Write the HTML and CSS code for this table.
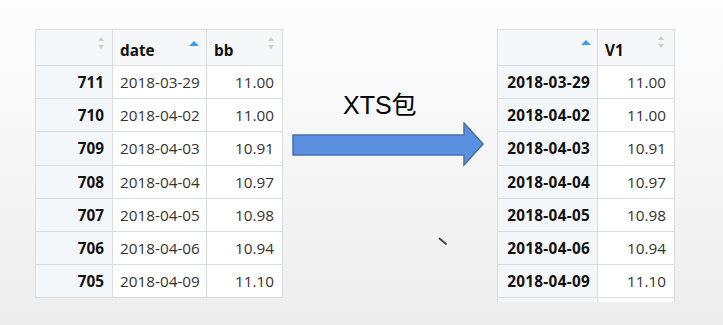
FILE: index.html
```html
<!DOCTYPE html>
<html lang="en">
<head>
	<meta charset="UTF-8">
	<title>xts</title>
	<link rel="stylesheet" href="styles.css">
</head>
<body>
	<div class="stage">
		<!-- 原始数据框 -->
		<div class="grid left-grid">
			<table>
				<colgroup>
					<col class="c-idx"><col class="c-date"><col class="c-bb">
				</colgroup>
				<thead>
					<tr>
						<th class="idx"><span class="sort both"></span></th>
						<th>date<span class="sort asc"></span></th>
						<th>bb<span class="sort both"></span></th>
					</tr>
				</thead>
				<tbody>
					<tr><td class="idx">711</td><td>2018-03-29</td><td class="num">11.00</td></tr>
					<tr><td class="idx">710</td><td>2018-04-02</td><td class="num">11.00</td></tr>
					<tr><td class="idx">709</td><td>2018-04-03</td><td class="num">10.91</td></tr>
					<tr><td class="idx">708</td><td>2018-04-04</td><td class="num">10.97</td></tr>
					<tr><td class="idx">707</td><td>2018-04-05</td><td class="num">10.98</td></tr>
					<tr><td class="idx">706</td><td>2018-04-06</td><td class="num">10.94</td></tr>
					<tr><td class="idx">705</td><td>2018-04-09</td><td class="num">11.10</td></tr>
				</tbody>
			</table>
		</div>

		<!-- 中间的箭头 -->
		<div class="middle">
			<div class="label">XTS包</div>
			<svg class="arrow" width="193" height="45" viewBox="0 0 193 45">
				<polygon points="1,13 172,13 172,1 191,22 172,43 172,33 1,33" fill="#5b8fe0" stroke="#4470ad" stroke-width="1.5"/>
			</svg>
		</div>

		<!-- 转换后的xts对象,下面还有行没显示出来 -->
		<div class="grid right-grid">
			<table>
				<colgroup>
					<col class="c-rdate"><col class="c-v1">
				</colgroup>
				<thead>
					<tr>
						<th class="idx"><span class="sort asc"></span></th>
						<th>V1<span class="sort both"></span></th>
					</tr>
				</thead>
				<tbody>
					<tr><td class="idx">2018-03-29</td><td class="num">11.00</td></tr>
					<tr><td class="idx">2018-04-02</td><td class="num">11.00</td></tr>
					<tr><td class="idx">2018-04-03</td><td class="num">10.91</td></tr>
					<tr><td class="idx">2018-04-04</td><td class="num">10.97</td></tr>
					<tr><td class="idx">2018-04-05</td><td class="num">10.98</td></tr>
					<tr><td class="idx">2018-04-06</td><td class="num">10.94</td></tr>
					<tr><td class="idx">2018-04-09</td><td class="num">11.10</td></tr>
					<tr class="more"><td class="idx"></td><td class="num"></td></tr>
				</tbody>
			</table>
		</div>

		<svg class="tick" width="10" height="9" viewBox="0 0 10 9">
			<line x1="1.5" y1="1.5" x2="8" y2="7" stroke="#3c4250" stroke-width="1.8" stroke-linecap="round"/>
		</svg>
	</div>
</body>
</html>
```

FILE: styles.css
```css
*{
	margin: 0;
	padding: 0;
	box-sizing: border-box;
}
html,body{
	width: 723px;
	height: 325px;
	overflow: hidden;
}
body{
	background: linear-gradient(#fdfdfd 0%, #f7f7f7 45%, #ededed 100%);
	font-family: "Open Sans", "Noto Sans", sans-serif;
}
.stage{
	position: relative;
	display: flex;
	align-items: flex-start;
	padding: 29px 0 0 35px;
	height: 325px;
}

/*表格公共样式*/
.grid table{
	border-collapse: collapse;
	table-layout: fixed;
	font-size: 15.3px;
	color: #333;
}
.grid th,
.grid td{
	border: 1px solid #dadde0;
	white-space: nowrap;
	overflow: hidden;
}
.grid th{
	position: relative;
	height: 36px;
	padding: 0 8px 5px 7px;
	vertical-align: bottom;
	text-align: left;
	font-weight: bold;
	color: #111;
	background: #f6f7f9;
	line-height: 20px;
}
.grid td{
	height: 33.2px;
	padding: 0 8px 0 7px;
	line-height: 20px;
	background: #fff;
}
.grid td.idx{
	background: #f3f7fa;
	font-weight: bold;
	color: #111;
	text-align: right;
	padding-right: 8px;
}
.grid td.num{
	text-align: right;
}

/*左边表格*/
.left-grid table{ width: 247px; }
.c-idx{ width: 77px; }
.c-date{ width: 94px; }
.c-bb{ width: 76px; }

/*右边表格,底部被截断*/
.right-grid{
	margin-left: 12px;
	height: 273px;
	overflow: hidden;
}
.right-grid table{ width: 177px; }
.c-rdate{ width: 100px; }
.c-v1{ width: 77px; }
.right-grid td.idx{
	letter-spacing: 0.3px;
	padding-right: 7px;
}

/*排序小图标*/
.sort{
	position: absolute;
	right: 7px;
}
.sort.both{
	top: 7px;
	width: 7px;
	height: 12px;
}
.sort.both::before,
.sort.both::after{
	content: "";
	position: absolute;
	left: 0;
	border-left: 3.5px solid transparent;
	border-right: 3.5px solid transparent;
}
.sort.both::before{
	top: 0;
	border-bottom: 4.5px solid #cfcfcf;
}
.sort.both::after{
	bottom: 0;
	border-top: 4.5px solid #cfcfcf;
}
.sort.asc{
	top: 11px;
	width: 0;
	height: 0;
	border-left: 5px solid transparent;
	border-right: 5px solid transparent;
	border-bottom: 5px solid #3d9cea;
}
.right-grid th.idx .sort.asc{
	top: 10px;
	right: 6px;
}
.right-grid .sort.both{
	right: 9px;
	top: 6px;
}

/*中间箭头和文字*/
.middle{
	margin-left: 9px;
	width: 193px;
	padding-top: 61px;
}
.label{
	font-family: "Liberation Sans", "Noto Sans CJK SC", sans-serif;
	font-size: 25px;
	line-height: 30px;
	color: #000;
	padding-left: 51px;
}
.arrow{
	display: block;
	margin-top: 2px;
}
.tick{
	position: absolute;
	left: 438px;
	top: 237px;
}
```
